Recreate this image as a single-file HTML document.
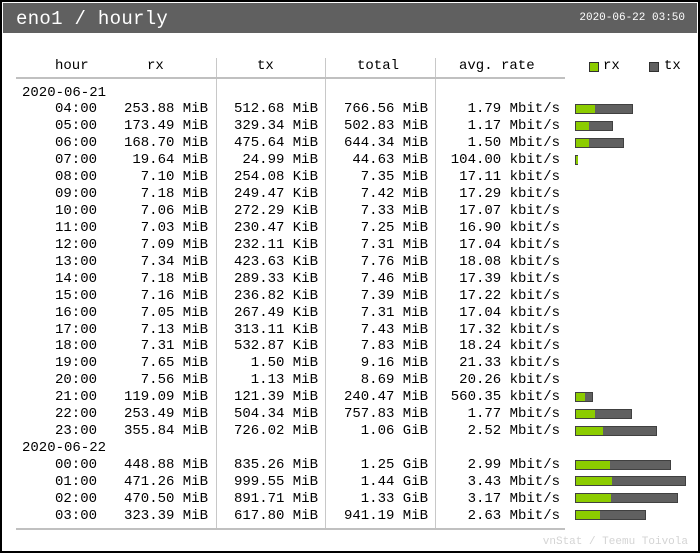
<!DOCTYPE html>
<html><head><meta charset="utf-8"><style>
*{margin:0;padding:0;box-sizing:border-box}
body{width:700px;height:553px;background:#fff;position:relative;overflow:hidden;font-family:"Liberation Mono",monospace;font-size:14px;color:#000}
#frame{position:absolute;left:0;top:0;width:700px;height:553px;border:2px solid #000;background:#fff}
#hdr{position:absolute;left:3px;top:3px;width:694px;height:30px;background:#606060}
#title{position:absolute;left:13px;top:5px;color:#fff;font-size:19px;letter-spacing:0.3px}
#date{position:absolute;right:12px;top:9px;color:#fff;font-size:11px}
.t{position:absolute;white-space:pre;line-height:17px;height:17px}
.r{text-align:right}
.hl{position:absolute;background:#c0c0c0;height:2px}
.vl{position:absolute;background:#c8c8c8;width:1px;top:58px;height:471px}
.bar{position:absolute;height:10px;background:#606060;border:1px solid #404040}
.bar i{position:absolute;left:0;top:0;height:100%;background:#8ccc00;display:block}
.lg{position:absolute;width:10px;height:10px;border:1px solid #303030}
#foot{position:absolute;right:12px;top:536px;color:#d4d4d4;font-size:11px}
</style></head><body>
<div id="frame"></div>
<div id="hdr"><div id="title">eno1 / hourly</div><div id="date">2020-06-22 03:50</div></div>
<div class="vl" style="left:216px"></div>
<div class="vl" style="left:325px"></div>
<div class="vl" style="left:435px"></div>
<div class="hl" style="left:16px;top:77px;width:549px"></div>
<div class="hl" style="left:16px;top:528px;width:549px"></div>
<div class="t" style="left:55px;top:58px">hour</div>
<div class="t" style="left:147px;top:58px">rx</div>
<div class="t" style="left:257px;top:58px">tx</div>
<div class="t" style="left:357px;top:58px">total</div>
<div class="t" style="left:459px;top:58px">avg. rate</div>
<div class="lg" style="left:589px;top:62px;background:#8ccc00"></div>
<div class="t" style="left:603px;top:58px">rx</div>
<div class="lg" style="left:649px;top:62px;background:#606060"></div>
<div class="t" style="left:664px;top:58px">tx</div>
<div id="rows"></div>
<div id="foot">vnStat / Teemu Toivola</div>
<script>
var d=[
["D","2020-06-21"],
["04:00","253.88 MiB","512.68 MiB","766.56 MiB","1.79 Mbit/s",57.7,19],
["05:00","173.49 MiB","329.34 MiB","502.83 MiB","1.17 Mbit/s",37.9,13],
["06:00","168.70 MiB","475.64 MiB","644.34 MiB","1.50 Mbit/s",48.5,12.7],
["07:00","19.64 MiB","24.99 MiB","44.63 MiB","104.00 kbit/s",3.4,1.5],
["08:00","7.10 MiB","254.08 KiB","7.35 MiB","17.11 kbit/s",0,0],
["09:00","7.18 MiB","249.47 KiB","7.42 MiB","17.29 kbit/s",0,0],
["10:00","7.06 MiB","272.29 KiB","7.33 MiB","17.07 kbit/s",0,0],
["11:00","7.03 MiB","230.47 KiB","7.25 MiB","16.90 kbit/s",0,0],
["12:00","7.09 MiB","232.11 KiB","7.31 MiB","17.04 kbit/s",0,0],
["13:00","7.34 MiB","423.63 KiB","7.76 MiB","18.08 kbit/s",0,0],
["14:00","7.18 MiB","289.33 KiB","7.46 MiB","17.39 kbit/s",0,0],
["15:00","7.16 MiB","236.82 KiB","7.39 MiB","17.22 kbit/s",0,0],
["16:00","7.05 MiB","267.49 KiB","7.31 MiB","17.04 kbit/s",0,0],
["17:00","7.13 MiB","313.11 KiB","7.43 MiB","17.32 kbit/s",0,0],
["18:00","7.31 MiB","532.87 KiB","7.83 MiB","18.24 kbit/s",0,0],
["19:00","7.65 MiB","1.50 MiB","9.16 MiB","21.33 kbit/s",0,0],
["20:00","7.56 MiB","1.13 MiB","8.69 MiB","20.26 kbit/s",0,0],
["21:00","119.09 MiB","121.39 MiB","240.47 MiB","560.35 kbit/s",18.1,9],
["22:00","253.49 MiB","504.34 MiB","757.83 MiB","1.77 Mbit/s",57,19],
["23:00","355.84 MiB","726.02 MiB","1.06 GiB","2.52 Mbit/s",81.7,26.8],
["D","2020-06-22"],
["00:00","448.88 MiB","835.26 MiB","1.25 GiB","2.99 Mbit/s",96.4,33.8],
["01:00","471.26 MiB","999.55 MiB","1.44 GiB","3.43 Mbit/s",111,35.5],
["02:00","470.50 MiB","891.71 MiB","1.33 GiB","3.17 Mbit/s",102.5,35.4],
["03:00","323.39 MiB","617.80 MiB","941.19 MiB","2.63 Mbit/s",70.9,24.3]];
var h="";
for(var i=0;i<d.length;i++){var r=d[i];var y=(84.5+i*16.93).toFixed(1);
if(r[0]=="D"){h+='<div class="t" style="left:22px;top:'+y+'px">'+r[1]+'</div>';continue;}
h+='<div class="t r" style="right:603px;top:'+y+'px">'+r[0]+'</div>';
h+='<div class="t r" style="right:492px;top:'+y+'px">'+r[1]+'</div>';
h+='<div class="t r" style="right:382px;top:'+y+'px">'+r[2]+'</div>';
h+='<div class="t r" style="right:272px;top:'+y+'px">'+r[3]+'</div>';
h+='<div class="t r" style="right:140px;top:'+y+'px">'+r[4]+'</div>';
if(r[5]>1.5){h+='<div class="bar" style="left:575px;top:'+(parseFloat(y)+2.5)+'px;width:'+r[5]+'px"><i style="width:'+r[6]+'px"></i></div>';}
}
document.getElementById("rows").innerHTML=h;
</script>
</body></html>
